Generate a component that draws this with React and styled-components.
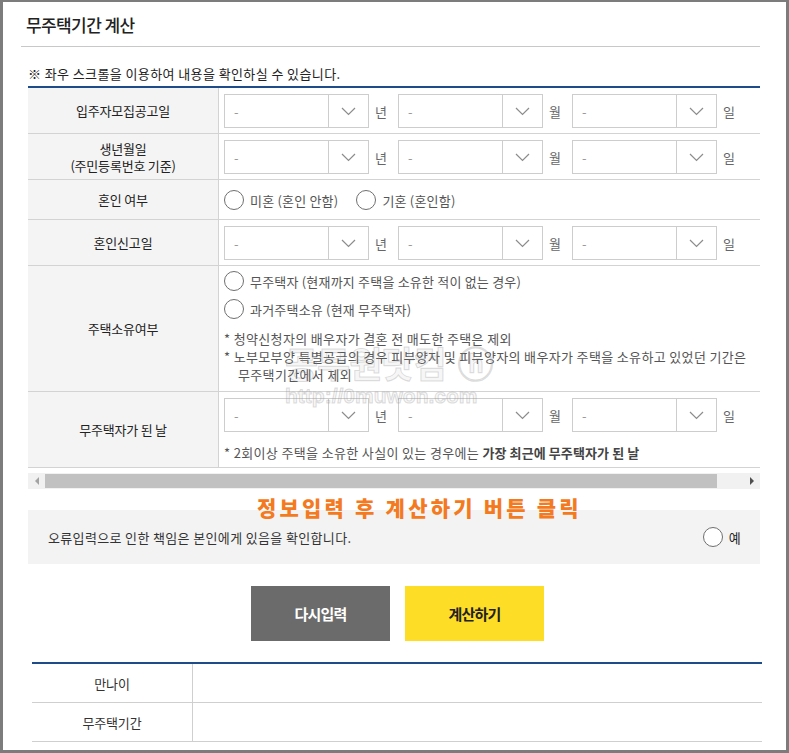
import React from "react";
import styled, { createGlobalStyle } from "styled-components";

const GlobalStyle = createGlobalStyle`
  html, body {
    margin: 0;
    padding: 0;
    background: #ffffff;
  }
  body {
    font-family: "Noto Sans CJK KR", "Noto Sans", sans-serif;
    color: #333;
  }
  * { box-sizing: border-box; }
`;

const dateRows = [
  { label: ["입주자모집공고일"] },
  { label: ["생년월일", "(주민등록번호 기준)"] },
];

const Chevron = () => (
  <svg width="15" height="9" viewBox="0 0 15 9" fill="none">
    <path d="M1 1 L7.5 7.5 L14 1" stroke="#8c8c8c" strokeWidth="1.2" />
  </svg>
);

const SelectBox = () => (
  <Select>
    <SelectValue>-</SelectValue>
    <SelectArrow>
      <Chevron />
    </SelectArrow>
  </Select>
);

const DateInputs = () => (
  <DateGroup>
    <SelectBox />
    <Unit>년</Unit>
    <SelectBox />
    <Unit>월</Unit>
    <SelectBox />
    <Unit>일</Unit>
  </DateGroup>
);

const Radio = ({ children }) => (
  <RadioItem>
    <RadioCircle />
    {children && <RadioText>{children}</RadioText>}
  </RadioItem>
);

const App = () => {
  return (
    <>
      <GlobalStyle />
      <Frame>
        <Title>무주택기간 계산</Title>
        <Body>
          <Notice>※ 좌우 스크롤을 이용하여 내용을 확인하실 수 있습니다.</Notice>
          <TableWrap>
            <Table>
              {dateRows.map((r, i) => (
                <Row key={i}>
                  <Label>
                    {r.label.map((l) => (
                      <span key={l}>{l}</span>
                    ))}
                  </Label>
                  <Cell>
                    <DateInputs />
                  </Cell>
                </Row>
              ))}
              <Row>
                <Label>혼인 여부</Label>
                <Cell $inline>
                  <Radio>미혼 (혼인 안함)</Radio>
                  <Radio>기혼 (혼인함)</Radio>
                </Cell>
              </Row>
              <Row>
                <Label>혼인신고일</Label>
                <Cell>
                  <DateInputs />
                </Cell>
              </Row>
              <Row>
                <Label>주택소유여부</Label>
                <Cell $pad="5px 5px 7px">
                  <RadioList>
                    <Radio>무주택자 (현재까지 주택을 소유한 적이 없는 경우)</Radio>
                    <Radio>과거주택소유 (현재 무주택자)</Radio>
                  </RadioList>
                  <Notes>
                    <Note>* 청약신청자의 배우자가 결혼 전 매도한 주택은 제외</Note>
                    <Note>
                      * 노부모부양 특별공급의 경우 피부양자 및 피부양자의 배우자가 주택을 소유하고 있었던 기간은
                      <br />
                      무주택기간에서 제외
                    </Note>
                  </Notes>
                </Cell>
              </Row>
              <Row>
                <Label>무주택자가 된 날</Label>
                <Cell>
                  <DateInputs />
                  <Notes $top="12px">
                    <Note>
                      * 2회이상 주택을 소유한 사실이 있는 경우에는 <strong>가장 최근에 무주택자가 된 날</strong>
                    </Note>
                  </Notes>
                </Cell>
              </Row>
            </Table>
            <Watermark>
              <WmName>공무원닷컴</WmName>
              <WmBadge>ⓗ</WmBadge>
              <WmUrl>http://0muwon.com</WmUrl>
            </Watermark>
          </TableWrap>

          <ScrollBar>
            <ScrollArrow $dir="left" />
            <ScrollThumb />
            <ScrollSpace />
            <ScrollArrow $dir="right" />
          </ScrollBar>

          <ConfirmBox>
            <Annotation>정보입력 후 계산하기 버튼 클릭</Annotation>
            <ConfirmText>오류입력으로 인한 책임은 본인에게 있음을 확인합니다.</ConfirmText>
            <Radio>
              <YesText>예</YesText>
            </Radio>
          </ConfirmBox>

          <ButtonRow>
            <ActionButton $variant="reset">다시입력</ActionButton>
            <ActionButton $variant="calc">계산하기</ActionButton>
          </ButtonRow>

          <ResultTable>
            <ResultRow>
              <ResultLabel>만나이</ResultLabel>
              <ResultValue />
            </ResultRow>
            <ResultRow>
              <ResultLabel>무주택기간</ResultLabel>
              <ResultValue />
            </ResultRow>
          </ResultTable>
        </Body>
      </Frame>
    </>
  );
};

export default App;

const Frame = styled.div`
  width: 789px;
  height: 753px;
  border: 3px solid #7c7c7c;
  border-top-width: 2px;
  background: #fff;
  padding: 0 26px 0 18px;
  overflow: hidden;
`;

const Title = styled.h2`
  margin: 0;
  height: 45px;
  padding: 0 0 0 5px;
  display: flex;
  align-items: center;
  font-size: 17px;
  font-weight: 500;
  letter-spacing: -0.6px;
  color: #222;
  border-bottom: 1px solid #c8c8c8;
`;

const Body = styled.div`
  padding-left: 7px;
`;

const Notice = styled.p`
  margin: 0;
  padding: 18px 0 4px;
  font-size: 13px;
  line-height: 17px;
  letter-spacing: 0.4px;
  color: #222;
`;

const TableWrap = styled.div`
  position: relative;
`;

const Table = styled.div`
  border-top: 2px solid #1e4b8a;
`;

const Row = styled.div`
  display: flex;
  border-bottom: 1px solid #d3d3d3;
`;

const Label = styled.div`
  width: 191px;
  flex-shrink: 0;
  background: #f4f4f4;
  border-right: 1px solid #d3d3d3;
  display: flex;
  flex-direction: column;
  align-items: center;
  justify-content: center;
  text-align: center;
  font-size: 13px;
  line-height: 17px;
  letter-spacing: -0.2px;
  color: #222;
`;

const Cell = styled.div`
  flex: 1;
  min-height: ${({ $inline }) => ($inline ? "39px" : "auto")};
  padding: ${({ $pad }) => $pad || "6px 5px 5px"};
  display: flex;
  flex-direction: ${({ $inline }) => ($inline ? "row" : "column")};
  align-items: ${({ $inline }) => ($inline ? "center" : "flex-start")};
  gap: ${({ $inline }) => ($inline ? "18px" : "0")};
`;

const DateGroup = styled.div`
  display: flex;
  align-items: center;
`;

const Select = styled.div`
  width: 145px;
  height: 34px;
  border: 1px solid #cdcdcd;
  display: flex;
  background: #fff;
`;

const SelectValue = styled.span`
  flex: 1;
  padding-left: 9px;
  display: flex;
  align-items: center;
  font-size: 13px;
  color: #999;
`;

const SelectArrow = styled.span`
  width: 40px;
  border-left: 1px solid #cdcdcd;
  display: flex;
  align-items: center;
  justify-content: center;
`;

const Unit = styled.span`
  margin: 0 11px 0 6px;
  font-size: 13px;
  color: #666;
`;

const RadioList = styled.div`
  display: flex;
  flex-direction: column;
  gap: 8px;
`;

const RadioItem = styled.label`
  display: flex;
  align-items: center;
`;

const RadioCircle = styled.span`
  width: 20px;
  height: 20px;
  border-radius: 50%;
  border: 1px solid #6f6f6f;
  background: #fff;
  flex-shrink: 0;
`;

const RadioText = styled.span`
  margin-left: 6px;
  font-size: 13px;
  line-height: 17px;
  letter-spacing: 0.2px;
  color: #555;
  white-space: nowrap;
`;

const YesText = styled.span`
  font-size: 13px;
  color: #222;
`;

const Notes = styled.div`
  margin-top: ${({ $top }) => $top || "11px"};
`;

const Note = styled.p`
  margin: 0;
  padding-left: 14px;
  text-indent: -14px;
  font-size: 13px;
  line-height: 18px;
  letter-spacing: 0.35px;
  color: #555;
  white-space: nowrap;
  strong {
    font-weight: 700;
    color: #444;
    letter-spacing: 0.1px;
  }
`;

const Watermark = styled.div`
  position: absolute;
  left: 257px;
  top: 254px;
  width: 230px;
  pointer-events: none;
  display: flex;
  flex-wrap: wrap;
  align-items: center;
  color: rgba(120, 120, 120, 0.08);
  -webkit-text-stroke: 1px rgba(140, 140, 140, 0.3);
  font-weight: 700;
`;

const WmName = styled.span`
  font-size: 36px;
  line-height: 44px;
  letter-spacing: -1px;
`;

const WmBadge = styled.span`
  margin-left: 12px;
  font-size: 36px;
  line-height: 44px;
`;

const WmUrl = styled.span`
  width: 100%;
  font-family: "Liberation Sans", sans-serif;
  font-size: 21px;
  line-height: 24px;
`;

const ScrollBar = styled.div`
  margin-top: 5px;
  height: 16px;
  background: #f1f1f1;
  display: flex;
  align-items: center;
`;

const ScrollArrow = styled.span`
  width: 17px;
  height: 16px;
  display: flex;
  align-items: center;
  justify-content: center;
  &::before {
    content: "";
    border-top: 4px solid transparent;
    border-bottom: 4px solid transparent;
    ${({ $dir }) =>
      $dir === "left"
        ? "border-right: 4px solid #a3a3a3;"
        : "border-left: 4px solid #505050;"}
  }
`;

const ScrollThumb = styled.span`
  width: 672px;
  height: 14px;
  background: #c1c1c1;
`;

const ScrollSpace = styled.span`
  flex: 1;
`;

const ConfirmBox = styled.div`
  position: relative;
  margin-top: 21px;
  height: 54px;
  padding: 0 19px 0 20px;
  background: #f3f3f3;
  display: flex;
  align-items: center;
  justify-content: space-between;
`;

const Annotation = styled.span`
  position: absolute;
  left: 229px;
  top: -16px;
  font-size: 21px;
  line-height: 26px;
  font-weight: 800;
  letter-spacing: 3.2px;
  color: #f47a22;
  white-space: nowrap;
`;

const ConfirmText = styled.span`
  font-size: 13px;
  letter-spacing: 0.35px;
  color: #333;
`;

const ButtonRow = styled.div`
  margin-top: 22px;
  padding-left: 7px;
  display: flex;
  justify-content: center;
  gap: 15px;
`;

const ActionButton = styled.button`
  width: 139px;
  height: 55px;
  border: none;
  font-family: inherit;
  font-size: 15px;
  font-weight: 700;
  letter-spacing: -0.8px;
  background: ${({ $variant }) => ($variant === "calc" ? "#fedd27" : "#6b6b6b")};
  color: ${({ $variant }) => ($variant === "calc" ? "#222" : "#fff")};
`;

const ResultTable = styled.div`
  margin: 21px -2px 0 4px;
  border-top: 2px solid #1e4b8a;
`;

const ResultRow = styled.div`
  display: flex;
  height: 39px;
  border-bottom: 1px solid #cfcfcf;
`;

const ResultLabel = styled.div`
  width: 161px;
  border-right: 1px solid #cfcfcf;
  display: flex;
  align-items: center;
  justify-content: center;
  font-size: 13px;
  letter-spacing: -0.2px;
  color: #333;
`;

const ResultValue = styled.div`
  flex: 1;
`;
